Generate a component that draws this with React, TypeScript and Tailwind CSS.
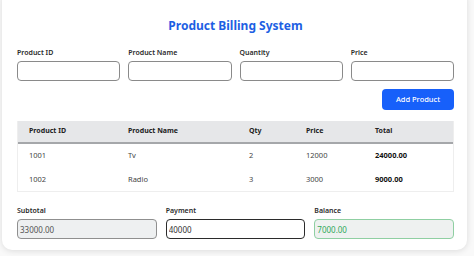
import { useState } from 'react'

const items = [
  { id: '1001', name: 'Tv', qty: 2, price: 12000 },
  { id: '1002', name: 'Radio', qty: 3, price: 3000 },
]

const font = { fontFamily: '"Noto Sans", "Open Sans", sans-serif' }

export default function App() {
  const [payment, setPayment] = useState('40000')
  const subtotal = items.reduce((s, i) => s + i.qty * i.price, 0)
  const balance = Number(payment) - subtotal

  const fields = ['Product ID', 'Product Name', 'Quantity', 'Price']

  return (
    <div className="w-[474px] h-[256px] overflow-hidden bg-[#f9f9f9]" style={font}>
      <div className="ml-[2px] mt-[-10px] w-[465px] h-[260px] rounded-[10px] bg-white shadow-[0_1px_6px_rgba(0,0,0,0.12)] pl-[15px] pr-[13px] pt-[28px]">
        <h1 className="text-center text-[12px] leading-[16px] font-bold text-[#1d5fe3]">
          Product Billing System
        </h1>

        {/* inputs */}
        <div className="mt-[13px] grid grid-cols-4 gap-[8px]">
          {fields.map(f => (
            <div key={f}>
              <label className="block text-[7px] leading-[11px] font-semibold text-[#2a2a2a] mb-[3px]">{f}</label>
              <input className="block w-full h-[20px] rounded-[4px] border border-[#8a8a8a] bg-white" />
            </div>
          ))}
        </div>

        <div className="flex justify-end mt-[8px]">
          <button className="h-[21px] w-[72px] rounded-[4px] bg-[#1760fa] text-white text-[7.5px] font-medium">
            Add Product
          </button>
        </div>

        {/* table */}
        <div className="mt-[11px] border border-[#eeeeee] border-t-0">
          <div className="grid grid-cols-[99px_121px_57px_69px_1fr] h-[23px] items-center bg-[#e6e7e9] border-b-2 border-[#a5a7aa] pl-[11px] text-[7px] font-bold text-[#222]">
            <div>Product ID</div>
            <div>Product Name</div>
            <div>Qty</div>
            <div>Price</div>
            <div>Total</div>
          </div>
          {items.map(i => (
            <div key={i.id} className="grid grid-cols-[99px_121px_57px_69px_1fr] h-[23.5px] items-center pl-[11px] text-[7.5px] text-[#444]">
              <div>{i.id}</div>
              <div>{i.name}</div>
              <div>{i.qty}</div>
              <div>{i.price}</div>
              <div className="font-bold text-[#111]">{(i.qty * i.price).toFixed(2)}</div>
            </div>
          ))}
        </div>

        {/* totals */}
        <div className="mt-[12.5px] grid grid-cols-3 gap-[9px]">
          <div>
            <label className="block text-[7px] leading-[11px] font-semibold text-[#2a2a2a] mb-[3.5px]">Subtotal</label>
            <input readOnly value={subtotal.toFixed(2)} className="block w-full h-[20px] rounded-[4px] border border-[#8f8f8f] bg-[#eef0f1] px-[2px] text-[8px] text-[#555]" />
          </div>
          <div>
            <label className="block text-[7px] leading-[11px] font-semibold text-[#2a2a2a] mb-[3.5px]">Payment</label>
            <input value={payment} onChange={e => setPayment(e.target.value)} className="block w-full h-[20px] rounded-[4px] border-[1.5px] border-[#2b2b2b] bg-white px-[2px] text-[8px] text-[#333] outline-none" />
          </div>
          <div>
            <label className="block text-[7px] leading-[11px] font-semibold text-[#2a2a2a] mb-[3.5px]">Balance</label>
            <input readOnly value={balance.toFixed(2)} className="block w-full h-[20px] rounded-[4px] border border-[#8fcfa2] bg-[#eef1f0] px-[2px] text-[8px] text-[#2fa85a]" />
          </div>
        </div>
      </div>
    </div>
  )
}
